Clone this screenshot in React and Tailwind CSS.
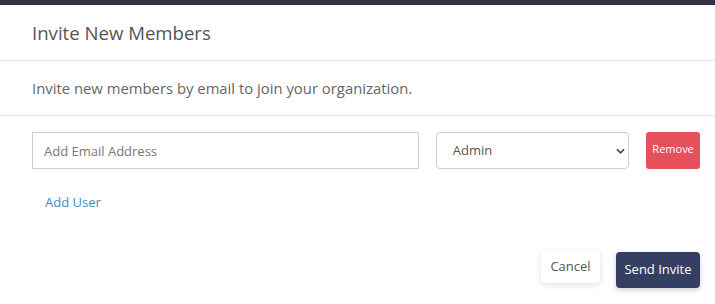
const App = () => {
  return (
    <section
      className="w-[715px] h-[304px] bg-white overflow-hidden"
      style={{ fontFamily: '"Open Sans", sans-serif' }}
    >
      <div className="h-[5px] bg-[#3b3049]" />
      <div className="h-[56px] flex items-center pl-8 border-b border-[#e4e4e4]">
        <h2 className="text-[18.6px] text-[#555] font-normal">Invite New Members</h2>
      </div>
      <div className="h-[55px] flex items-center pl-8 border-b border-[#e4e4e4]">
        <p className="text-[14.85px] text-[#666]">
          Invite new members by email to join your organization.
        </p>
      </div>
      <div className="pl-8 pr-[15px] pt-4">
        <div className="flex items-center gap-[17px]">
          <input
            placeholder="Add Email Address"
            className="w-[388px] h-[37px] border border-[#cfcfcf] px-[11px] text-[13px] text-[#555] placeholder:text-[#777] outline-none"
          />
          <div className="relative w-[194px] h-[37px]">
            <select className="w-full h-full appearance-none border border-[#cfcfcf] rounded-[4px] pl-4 text-[13px] text-[#555] bg-white outline-none">
              <option>Admin</option>
              <option>Member</option>
            </select>
            <svg
              viewBox="0 0 10 6"
              className="absolute right-[4px] top-[16px] w-[9px] h-[6px]"
              fill="none"
              stroke="#444"
              strokeWidth="1.8"
            >
              <path d="M1 1l4 4 4-4" />
            </svg>
          </div>
          <button className="w-[54px] h-[37px] rounded-[3px] bg-[#e5505b] text-white text-[11px] pb-[3px]">
            Remove
          </button>
        </div>
        <button className="mt-[24px] ml-[13px] text-[13px] text-[#3b8fc4]">
          Add User
        </button>
        <div className="flex justify-end items-start gap-4 mt-[39px]">
          <button className="w-[59px] h-[33px] bg-white rounded-[4px] shadow-[0_2px_6px_rgba(0,0,0,0.12)] text-[13px] text-[#555] -mt-[2px]">
            Cancel
          </button>
          <button className="w-[84px] h-[36px] bg-[#353f63] rounded-[4px] shadow-[0_2px_5px_rgba(53,63,99,0.25)] text-[13px] text-white">
            Send Invite
          </button>
        </div>
      </div>
    </section>
  );
};

export default App;
